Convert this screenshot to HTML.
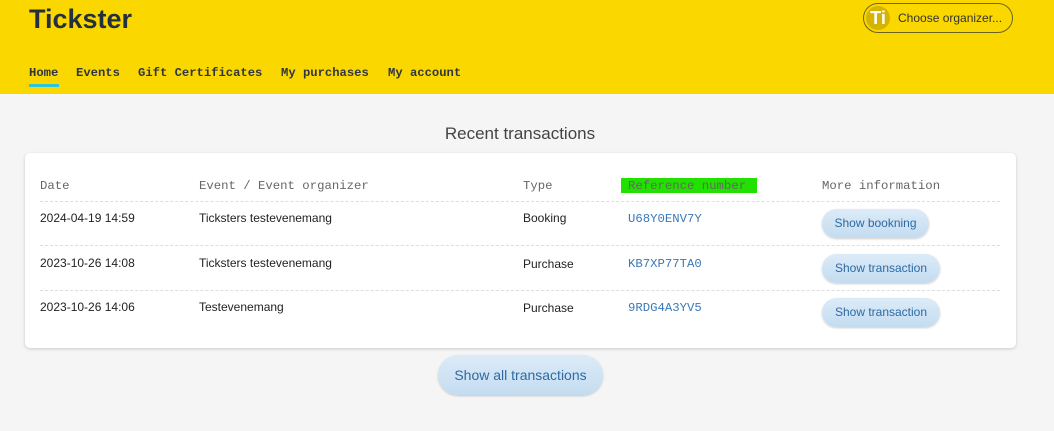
<!DOCTYPE html>
<html><head><style>
body{margin:0;width:1054px;height:431px;background:#f5f5f5;font-family:"Liberation Sans",sans-serif;overflow:hidden;position:relative}
.hdr{position:absolute;left:0;top:0;width:1054px;height:94px;background:#fbd700}
.logo{position:absolute;left:29px;top:4px;font:bold 27px "Liberation Sans",sans-serif;color:#24303e;letter-spacing:0px}
.nav{position:absolute;top:66px;font:bold 12.2px "Liberation Mono",monospace;color:#2f3640}
.ul{position:absolute;left:29px;top:84px;width:30px;height:3px;background:#2bc4d8}
.org{position:absolute;left:863px;top:3px;width:148px;height:28px;border:1px solid #6b6420;border-radius:15px}
.org .c{position:absolute;left:2px;top:2px;width:24px;height:24px;border-radius:50%;background:#d5b400;color:#fff;font:bold 18px "Liberation Sans",sans-serif;line-height:24px;text-align:center;overflow:hidden}
.org span{position:absolute;left:34px;top:7px;font-size:12px;color:#333}
h1{position:absolute;left:0;width:1040px;top:124px;margin:0;text-align:center;font-weight:normal;font-size:17px;color:#444}
.card{position:absolute;left:25px;top:153px;width:991px;height:195px;background:#fff;border-radius:5px;box-shadow:0 1px 3px rgba(0,0,0,.18)}
.t{position:absolute;font-size:12px;color:#222}
.th{position:absolute;top:179px;font:12.3px "Liberation Mono",monospace;color:#666}
.ref{position:absolute;font:12.3px "Liberation Mono",monospace;color:#3a79b8}
.line{position:absolute;left:40px;width:960px;border-top:1px dashed #ddd}
.btn{position:absolute;left:822px;height:29px;border-radius:15px;background:linear-gradient(#dcebf8,#c4dcf0);box-shadow:0 1px 2px rgba(0,0,0,.2);color:#2d6aa3;font-size:12px;line-height:29px;text-align:center}
</style></head><body>
<div class="hdr">
<div class="logo">Tickster</div>
<div class="nav" style="left:29px">Home</div>
<div class="nav" style="left:76px">Events</div>
<div class="nav" style="left:138px">Gift Certificates</div>
<div class="nav" style="left:281px">My purchases</div>
<div class="nav" style="left:388px">My account</div>
<div class="ul"></div>
<div class="org"><div class="c">Ti</div><span>Choose organizer...</span></div>
</div>
<h1>Recent transactions</h1>
<div class="card"></div>
<div class="th" style="left:40px">Date</div>
<div class="th" style="left:199px">Event / Event organizer</div>
<div class="th" style="left:523px">Type</div>
<div style="position:absolute;left:621px;top:178px;width:136px;height:15px;background:#22e000"></div>
<div class="th" style="left:628px">Reference number</div>
<div class="th" style="left:822px">More information</div>
<div class="line" style="top:201px"></div>
<div class="line" style="top:245px"></div>
<div class="line" style="top:290px"></div>
<div class="t" style="left:40px;top:211px">2024-04-19 14:59</div>
<div class="t" style="left:199px;top:211px">Ticksters testevenemang</div>
<div class="t" style="left:523px;top:211px">Booking</div>
<div class="ref" style="left:628px;top:212px">U68Y0ENV7Y</div>
<div class="btn" style="top:209px;width:107px">Show bookning</div>
<div class="t" style="left:40px;top:256px">2023-10-26 14:08</div>
<div class="t" style="left:199px;top:256px">Ticksters testevenemang</div>
<div class="t" style="left:523px;top:257px">Purchase</div>
<div class="ref" style="left:628px;top:257px">KB7XP77TA0</div>
<div class="btn" style="top:254px;width:118px">Show transaction</div>
<div class="t" style="left:40px;top:300px">2023-10-26 14:06</div>
<div class="t" style="left:199px;top:300px">Testevenemang</div>
<div class="t" style="left:523px;top:301px">Purchase</div>
<div class="ref" style="left:628px;top:301px">9RDG4A3YV5</div>
<div class="btn" style="top:298px;width:118px">Show transaction</div>
<div class="btn" style="left:438px;top:355px;width:165px;height:40px;line-height:40px;border-radius:20px;font-size:14px">Show all transactions</div>
</body></html>
